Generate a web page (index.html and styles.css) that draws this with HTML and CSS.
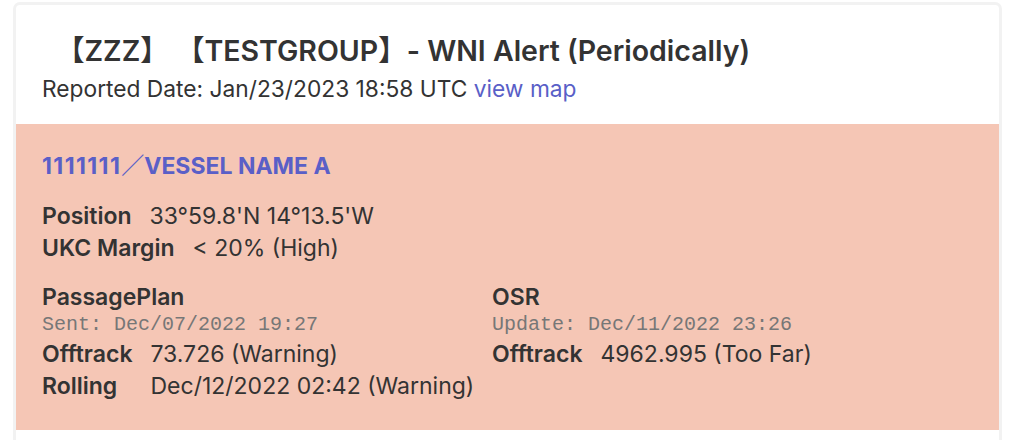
FILE: index.html
```html
<!DOCTYPE html>
<html lang="en">
<head>
<meta charset="utf-8">
<title>WNI Alert</title>
<link rel="stylesheet" href="styles.css">
</head>
<body>
<div class="card">
  <div class="card-header">
    <h1 class="title">【ZZZ】 【TESTGROUP】- WNI Alert (Periodically)</h1>
    <p class="reported">Reported Date: Jan/23/2023 18:58 UTC <a class="link" href="#">view map</a></p>
  </div>
  <div class="alert">
    <h2 class="vessel"><span class="vessel-no">1111111</span>／VESSEL NAME A</h2>
    <div class="facts">
      <div class="fact"><span class="label">Position</span><span class="value">33°59.8'N 14°13.5'W</span></div>
      <div class="fact"><span class="label">UKC Margin</span><span class="value">&lt; 20% (High)</span></div>
    </div>
    <div class="columns">
      <section class="col">
        <h3 class="col-title">PassagePlan</h3>
        <div class="stamp">Sent: Dec/07/2022 19:27</div>
        <div class="grid">
          <span class="label">Offtrack</span><span class="value">73.726 (Warning)</span>
          <span class="label">Rolling</span><span class="value">Dec/12/2022 02:42 (Warning)</span>
        </div>
      </section>
      <section class="col">
        <h3 class="col-title">OSR</h3>
        <div class="stamp">Update: Dec/11/2022 23:26</div>
        <div class="grid">
          <span class="label">Offtrack</span><span class="value">4962.995 (Too Far)</span>
        </div>
      </section>
    </div>
  </div>
</div>
</body>
</html>
```

FILE: styles.css
```css
* { box-sizing: border-box; }
body {
  margin: 0;
  background: #ffffff;
  font-family: Inter, "Noto Sans CJK JP", sans-serif;
  color: #333333;
}
.card {
  margin: 2px 8px 0 13px;
  border: 3px solid #f2f2f2;
  border-bottom: none;
  border-radius: 7px 7px 0 0;
  height: 460px;
}
.card-header {
  padding: 28px 26px 20px 26px;
}
.title {
  margin: 0;
  padding-left: 14px;
  font-size: 28.5px;
  font-weight: 600;
  line-height: 36px;
}
.reported {
  margin: 5px 0 0 0;
  font-size: 22.75px;
  line-height: 30px;
}
.link {
  color: #5a5fc7;
  text-decoration: none;
}
.alert {
  background: #f5c6b5;
  padding: 27px 26px 27px 26px;
  height: 306px;
}
.vessel {
  margin: 0;
  color: #5a5fc7;
  font-size: 23px;
  font-weight: 700;
  line-height: 30px;
}
.vessel-no {
  letter-spacing: 1.4px;
}
.facts {
  margin-top: 19px;
}
.fact {
  display: flex;
  gap: 18px;
  font-size: 23px;
  line-height: 32px;
}
.label { font-weight: 600; }
.columns {
  display: grid;
  grid-template-columns: 450px 1fr;
  margin-top: 18px;
}
.col-title {
  margin: 0;
  font-size: 23px;
  font-weight: 600;
  line-height: 30px;
}
.stamp {
  font-family: "Liberation Mono", monospace;
  font-size: 20px;
  color: #777777;
  line-height: 26px;
}
.grid {
  display: grid;
  grid-template-columns: max-content 1fr;
  column-gap: 18px;
  font-size: 23px;
  line-height: 32px;
}
```
